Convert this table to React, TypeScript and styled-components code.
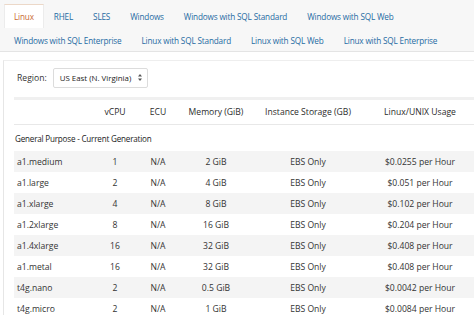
import styled, { createGlobalStyle } from "styled-components";

const GlobalStyle = createGlobalStyle`
  html, body {
    margin: 0;
    padding: 0;
    background: #fff;
    font-family: "Open Sans", "Noto Sans", sans-serif;
    color: #333;
    overflow: hidden;
  }
`;

const Page = styled.div`
  width: 474px;
  height: 315px;
  overflow: hidden;
`;

const TabBar = styled.div`
  display: flex;
  flex-wrap: wrap;
  align-content: flex-start;
  padding: 4px 0 0 4px;
  background: #f7f7f7;
  border-bottom: 1px solid #e4e4e4;
  height: 52px;
  box-sizing: border-box;
  width: 474px;
`;

const Tab = styled.div<{ $active?: boolean }>`
  height: 24px;
  display: flex;
  align-items: center;
  padding: 0 9px;
  font-size: 8.2px;
  letter-spacing: -0.17px;
  font-weight: 400;
  color: ${(p) => (p.$active ? "#c96a33" : "#1f6ba3")};
  background: ${(p) => (p.$active ? "#fff" : "transparent")};
  border-top: 1px solid ${(p) => (p.$active ? "#ecd8c8" : "transparent")};
  border-left: 1px solid ${(p) => (p.$active ? "#ececec" : "transparent")};
  border-right: 1px solid ${(p) => (p.$active ? "#ececec" : "transparent")};
  box-sizing: border-box;
  white-space: nowrap;
`;

const Panel = styled.div`
  margin-top: 8px;
  margin-left: 3px;
  border-left: 1px solid #e6e6e6;
  border-top: 1px solid #eeeeee;
  padding: 6px 0 0 10px;
`;

const RegionRow = styled.div`
  display: flex;
  align-items: center;
  gap: 6px;
  padding-left: 3px;
  height: 21px;
  font-size: 8.6px;
`;

const Select = styled.div`
  display: flex;
  align-items: center;
  gap: 7px;
  height: 20px;
  padding: 0 5px 0 6px;
  border: 1px solid #dcdcdc;
  border-radius: 2px;
  box-sizing: border-box;
  font-size: 7.9px;
  color: #222;
`;

const Table = styled.div`
  margin-top: 9px;
  border-top: 3px solid #f0f0f0;
`;

const Row = styled.div<{ $shaded?: boolean }>`
  display: grid;
  grid-template-columns: 81px 40px 46px 70px 114px 110px;
  height: 21px;
  align-items: center;
  font-size: 8.6px;
  color: #333;
  background: ${(p) => (p.$shaded ? "#f4f4f4" : "transparent")};
`;

const HeadRow = styled(Row)`
  height: 24px;
  border-bottom: 1px solid #e8e8e8;
  color: #2b2b2b;
`;

const Cell = styled.div<{ $left?: boolean }>`
  text-align: ${(p) => (p.$left ? "left" : "center")};
  padding-left: ${(p) => (p.$left ? "3px" : "0")};
  white-space: nowrap;
`;

const Section = styled.div`
  height: 26px;
  display: flex;
  align-items: center;
  padding-left: 1px;
  font-size: 8.1px;
  letter-spacing: -0.2px;
  font-weight: 500;
  color: #222;
`;

const UpDown = () => (
  <svg width="4" height="7" viewBox="0 0 4 7">
    <path d="M2 0 L4 2.6 L0 2.6 Z M2 7 L4 4.4 L0 4.4 Z" fill="#555" />
  </svg>
);

const tabs1 = ["Linux", "RHEL", "SLES", "Windows", "Windows with SQL Standard", "Windows with SQL Web"];
const tabs2 = ["Windows with SQL Enterprise", "Linux with SQL Standard", "Linux with SQL Web", "Linux with SQL Enterprise"];

const rows = [
  ["a1.medium", "1", "N/A", "2 GiB", "EBS Only", "$0.0255 per Hour"],
  ["a1.large", "2", "N/A", "4 GiB", "EBS Only", "$0.051 per Hour"],
  ["a1.xlarge", "4", "N/A", "8 GiB", "EBS Only", "$0.102 per Hour"],
  ["a1.2xlarge", "8", "N/A", "16 GiB", "EBS Only", "$0.204 per Hour"],
  ["a1.4xlarge", "16", "N/A", "32 GiB", "EBS Only", "$0.408 per Hour"],
  ["a1.metal", "16", "N/A", "32 GiB", "EBS Only", "$0.408 per Hour"],
  ["t4g.nano", "2", "N/A", "0.5 GiB", "EBS Only", "$0.0042 per Hour"],
  ["t4g.micro", "2", "N/A", "1 GiB", "EBS Only", "$0.0084 per Hour"],
];

export default function App() {
  return (
    <Page>
      <GlobalStyle />
      <TabBar>
        {tabs1.map((t) => (
          <Tab key={t} $active={t === "Linux"}>{t}</Tab>
        ))}
        {tabs2.map((t) => (
          <Tab key={t}>{t}</Tab>
        ))}
      </TabBar>
      <Panel>
        <RegionRow>
          <span>Region:</span>
          <Select>
            US East (N. Virginia)
            <UpDown />
          </Select>
        </RegionRow>
        <Table>
          <HeadRow>
            <Cell $left />
            <Cell>vCPU</Cell>
            <Cell>ECU</Cell>
            <Cell>Memory (GiB)</Cell>
            <Cell>Instance Storage (GB)</Cell>
            <Cell>Linux/UNIX Usage</Cell>
          </HeadRow>
          <Section>General Purpose - Current Generation</Section>
          {rows.map((r, i) => (
            <Row key={r[0]} $shaded={i % 2 === 0}>
              {r.map((c, j) => (
                <Cell key={j} $left={j === 0}>{c}</Cell>
              ))}
            </Row>
          ))}
        </Table>
      </Panel>
    </Page>
  );
}
